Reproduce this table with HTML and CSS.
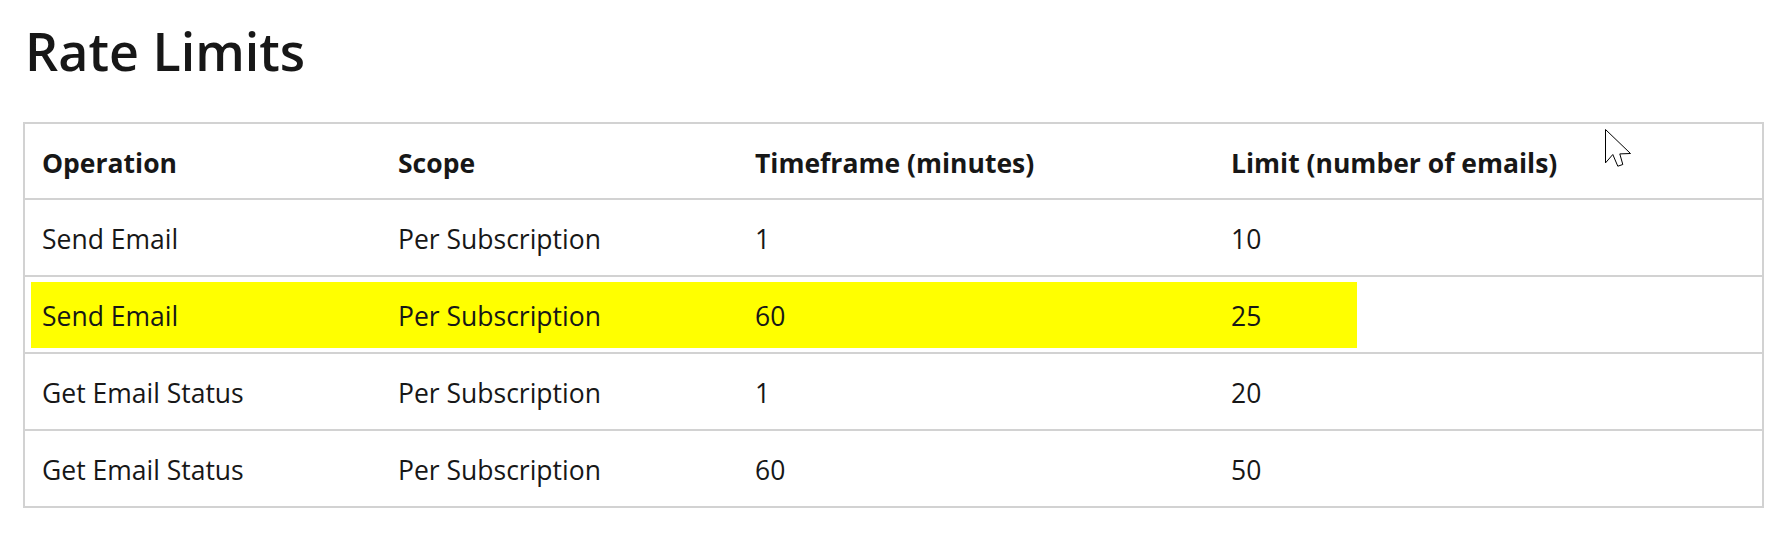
FILE: index.html
```html
<!DOCTYPE html>
<html lang="en">
<head>
<meta charset="utf-8">
<title>Rate Limits</title>
<link rel="stylesheet" href="styles.css">
</head>
<body>
<main class="page">
  <h1 class="title">Rate Limits</h1>
  <div class="table-wrap">
    <div class="highlight"></div>
    <table class="limits">
      <colgroup>
        <col class="c-op">
        <col class="c-scope">
        <col class="c-time">
        <col class="c-limit">
      </colgroup>
      <thead>
        <tr><th>Operation</th><th>Scope</th><th>Timeframe (minutes)</th><th>Limit (number of emails)</th></tr>
      </thead>
      <tbody>
        <tr><td>Send Email</td><td>Per Subscription</td><td>1</td><td>10</td></tr>
        <tr><td>Send Email</td><td>Per Subscription</td><td>60</td><td>25</td></tr>
        <tr><td>Get Email Status</td><td>Per Subscription</td><td>1</td><td>20</td></tr>
        <tr><td>Get Email Status</td><td>Per Subscription</td><td>60</td><td>50</td></tr>
      </tbody>
    </table>
    <svg class="cursor" width="27" height="39" viewBox="0 0 27 39" aria-hidden="true">
      <path d="M0.5 0.5 L0.5 33.9 L7.8 25.5 L12.8 37.2 L17.8 35.5 L14.8 24.9 L25.5 24.5 Z" fill="#fff" stroke="#000" stroke-width="1" stroke-linejoin="miter"/>
    </svg>
  </div>
</main>
</body>
</html>
```

FILE: styles.css
```css
html, body {
  margin: 0;
  padding: 0;
  background: #ffffff;
}

body {
  font-family: "Open Sans", "Noto Sans", "Liberation Sans", sans-serif;
  color: #171717;
}

.page {
  padding: 16px 24px 0 23px;
}

.title {
  margin: 0 0 36px 2px;
  font-size: 52px;
  line-height: 70px;
  font-weight: 600;
  color: #171717;
}

.table-wrap {
  position: relative;
  z-index: 0;
}

.highlight {
  position: absolute;
  z-index: -1;
  left: 8px;
  top: 160px;
  width: 1326px;
  height: 66px;
  background: #ffff00;
}

.limits {
  width: 100%;
  border-collapse: collapse;
  table-layout: fixed;
  border: 2px solid #d2d2d2;
  font-size: 26.5px;
  line-height: 36px;
}

.c-op { width: 357px; }
.c-scope { width: 357px; }
.c-time { width: 476px; }

.limits th,
.limits td {
  text-align: left;
  padding: 21px 17px 18px 17px;
  border-top: 2px solid #d2d2d2;
  white-space: nowrap;
}

.limits th {
  font-weight: 700;
  padding-bottom: 17px;
}

.cursor {
  position: absolute;
  left: 1582px;
  top: 7px;
}
```
